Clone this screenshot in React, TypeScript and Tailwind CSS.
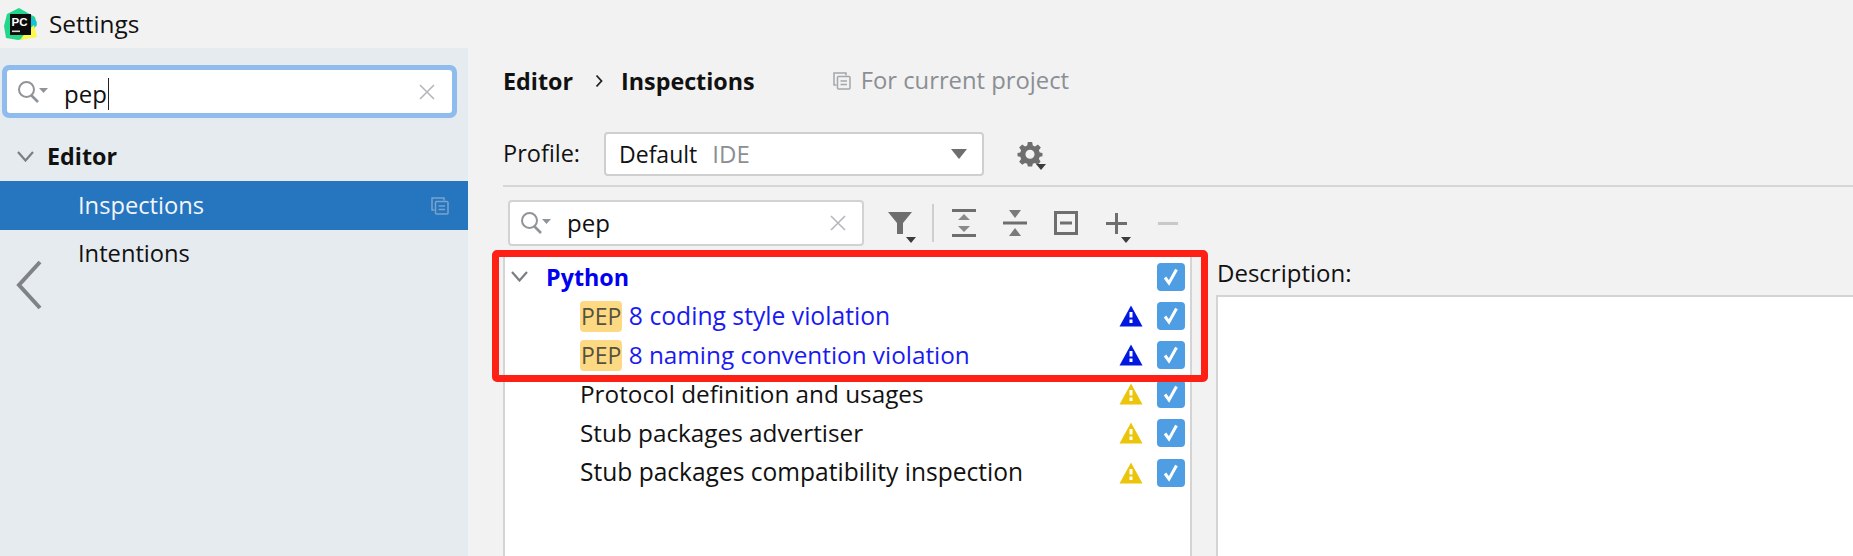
import type { ReactNode } from "react"

const FONT = "[font-family:'Open_Sans','Noto_Sans',sans-serif]"

function SearchIcon() {
    return (
        <svg width="34" height="26" viewBox="0 0 34 26" fill="none">
            <circle cx="10.5" cy="10.5" r="7.5" stroke="#8f9499" strokeWidth="2" />
            <path d="M15.5 16.5 L22 23" stroke="#8f9499" strokeWidth="2.6" />
            <path d="M23 9 H32 L27.5 14 Z" fill="#8f9499" />
        </svg>
    )
}

function ClearIcon({ size = 16 }: { size?: number }) {
    return (
        <svg width={size} height={size} viewBox="0 0 16 16" fill="none">
            <path d="M1 1 L15 15 M15 1 L1 15" stroke="#b4b8bc" strokeWidth="1.6" />
        </svg>
    )
}

function CopyIcon({ color }: { color: string }) {
    return (
        <svg width="18" height="18" viewBox="0 0 18 18" fill="none" stroke={color} strokeWidth="1.5">
            <path d="M3.5 13 H1 V1 H13 V3.5" />
            <rect x="4.5" y="4.5" width="12.5" height="12.5" rx="1" />
            <path d="M7.5 9 H14 M7.5 12.5 H14" />
        </svg>
    )
}

function Chevron() {
    return (
        <svg width="17" height="11" viewBox="0 0 17 11" fill="none">
            <path d="M1 1 L8.5 9.5 L16 1" stroke="#7b7f83" strokeWidth="2.2" />
        </svg>
    )
}

function DropMark() {
    return (
        <svg width="10" height="6" viewBox="0 0 10 6">
            <path d="M0 0 H10 L5 6 Z" fill="#3c3c3c" />
        </svg>
    )
}

function ToolIcon({ width, children, drop }: { width: number; children: ReactNode; drop?: boolean }) {
    return (
        <div className="relative flex h-[30px] items-center justify-center" style={{ width }}>
            {children}
            {drop && (
                <span className="absolute -right-[4px] -bottom-[5px] flex">
                    <DropMark />
                </span>
            )}
        </div>
    )
}

function Severity({ color }: { color: string }) {
    return (
        <svg width="24" height="22" viewBox="0 0 24 22">
            <path d="M12 0.5 L23.5 21.5 H0.5 Z" fill={color} />
            <rect x="10.5" y="7" width="3" height="5.5" fill="#fff" />
            <rect x="10.5" y="14.5" width="3" height="3.5" fill="#fff" />
        </svg>
    )
}

function CheckBox() {
    return (
        <span className="flex h-[28px] w-[28px] flex-none items-center justify-center rounded-[4px] bg-[#4f9ee3]">
            <svg width="20" height="20" viewBox="0 0 20 20" fill="none">
                <path d="M4 10.5 L8 16 L15.5 2.5" stroke="#fff" strokeWidth="3" />
            </svg>
        </span>
    )
}

function Row({ children, severity }: { children: ReactNode; severity?: string }) {
    return (
        <div className="flex h-[39.2px] items-center pr-[5px]">
            <div className="flex-1 whitespace-pre">{children}</div>
            {severity && (
                <span className="mr-[14px] flex">
                    <Severity color={severity} />
                </span>
            )}
            <CheckBox />
        </div>
    )
}

function PepLabel({ text, size }: { text: string; size: string }) {
    return (
        <span className={`ml-[75px] text-[#1a1af0] ${size}`}>
            <span className="inline-block h-[31px] rounded-[4px] bg-[#fed983] px-[1px] text-[23px] leading-[30px] text-[#55523e]">PEP</span>
            {text}
        </span>
    )
}

function PlainLabel({ text, size = "text-[24.3px]" }: { text: string; size?: string }) {
    return <span className={`ml-[75px] text-[#111] ${size}`}>{text}</span>
}

function Sidebar() {
    return (
        <aside className="w-[468px] flex-none bg-[#e6ebf0]">
            <div className="pl-[2px] pt-[17px]">
                <div className="h-[53px] w-[455px] rounded-[7px] bg-[#8fbcec] p-[5px]">
                    <div className="flex h-[43px] items-center rounded-[3px] bg-white pl-[9px] pr-[17px]">
                        <SearchIcon />
                        <span className="ml-[14px] flex-1 text-[24px] text-[#111]">
                            pep<span className="ml-[1px] inline-block h-[32px] w-[1.5px] translate-y-[7px] bg-[#222]" />
                        </span>
                        <ClearIcon />
                    </div>
                </div>
            </div>
            <div className="mt-[14px] flex h-[49px] items-center pl-[17px]">
                <Chevron />
                <span className="ml-[13px] text-[23.3px] font-bold text-[#111]">Editor</span>
            </div>
            <div className="flex h-[49px] items-center justify-between bg-[#2675bf] pl-[78px] pr-[19px] text-[23.7px] text-[#f2f6fa]">
                <span>Inspections</span>
                <CopyIcon color="#7ba3cc" />
            </div>
            <div className="flex h-[47px] items-center pl-[78px] text-[23.7px] text-[#111]">Intentions</div>
        </aside>
    )
}

function Toolbar() {
    return (
        <div className="mt-[13px] flex items-center">
            <div className="ml-[5px] flex h-[46px] w-[356px] items-center rounded-[4px] border-2 border-[#d2d2d2] bg-white pl-[9px] pr-[16px]">
                <SearchIcon />
                <span className="ml-[14px] flex-1 text-[24px] text-[#111]">pep</span>
                <ClearIcon />
            </div>
            <div className="ml-[24px] flex items-center">
                <ToolIcon width={24} drop>
                    <svg width="24" height="22" viewBox="0 0 24 22">
                        <path d="M0 0 H24 L15 11 V22 H9 V11 Z" fill="#6e6e6e" />
                    </svg>
                </ToolIcon>
                <div className="ml-[20px] h-[38px] w-[2px] bg-[#cfcfcf]" />
                <div className="ml-[18px]">
                    <ToolIcon width={24}>
                        <svg width="24" height="28" viewBox="0 0 24 28">
                            <path d="M0 0 H24 V3 H0 Z M0 25 H24 V28 H0 Z" fill="#6e6e6e" />
                            <path d="M12 5 L18 11 H6 Z M12 23 L6 17 H18 Z" fill="#8a8a8a" />
                        </svg>
                    </ToolIcon>
                </div>
                <div className="ml-[27px]">
                    <ToolIcon width={24}>
                        <svg width="24" height="26" viewBox="0 0 24 26">
                            <path d="M0 11.5 H24 V14.5 H0 Z" fill="#6e6e6e" />
                            <path d="M6 0 H18 L12 8 Z M12 18 L18 26 H6 Z" fill="#7a7a7a" />
                        </svg>
                    </ToolIcon>
                </div>
                <div className="ml-[27px]">
                    <ToolIcon width={24}>
                        <svg width="24" height="24" viewBox="0 0 24 24" fill="none">
                            <rect x="1.5" y="1.5" width="21" height="21" stroke="#6e6e6e" strokeWidth="3" />
                            <path d="M6 12 H18" stroke="#6e6e6e" strokeWidth="3" />
                        </svg>
                    </ToolIcon>
                </div>
                <div className="ml-[28px]">
                    <ToolIcon width={21} drop>
                        <svg width="21" height="21" viewBox="0 0 21 21">
                            <path d="M0 9 H21 V12 H0 Z M9 0 H12 V21 H9 Z" fill="#6e6e6e" />
                        </svg>
                    </ToolIcon>
                </div>
                <div className="ml-[31px]">
                    <ToolIcon width={20}>
                        <div className="h-[3px] w-[20px] bg-[#c8c8c8]" />
                    </ToolIcon>
                </div>
            </div>
        </div>
    )
}

function InspectionTree() {
    return (
        <div className="relative h-[299px] w-[689px] flex-none border-x-2 border-[#d4d4d4] bg-white text-[23px]">
            <div className="flex h-[39.2px] items-center pl-[6px] pr-[5px]">
                <Chevron />
                <span className="ml-[18px] flex-1 translate-y-[1px] text-[23.3px] font-bold text-[#0000f0]">Python</span>
                <CheckBox />
            </div>
            <Row severity="#0018e0"><PepLabel size="text-[24.7px]" text=" 8 coding style violation" /></Row>
            <Row severity="#0018e0"><PepLabel size="text-[24.3px]" text=" 8 naming convention violation" /></Row>
            <Row severity="#ecc40a"><PlainLabel text="Protocol definition and usages" /></Row>
            <Row severity="#ecc40a"><PlainLabel text="Stub packages advertiser" /></Row>
            <Row severity="#ecc40a"><PlainLabel size="text-[24.55px]" text="Stub packages compatibility inspection" /></Row>
        </div>
    )
}

export default function App() {
    return (
        <div className={`relative flex h-[556px] w-[1853px] flex-col overflow-hidden bg-[#f2f2f2] ${FONT}`}>

            {/* Title bar */}
            <div className="flex h-[48px] flex-none items-center pl-[4px]">
                <svg width="33" height="32" viewBox="0 0 33 32">
                    <path d="M3 6 L15 0 L22 4 L31 9 L33 17 L28 23 L30 29 L14 32 L2 30 L0 18 Z" fill="#21d789" />
                    <path d="M20 3 L33 14 L29 22 L24 10 Z" fill="#12c2d8" />
                    <path d="M16 32 L33 29 L30 17 L22 24 Z" fill="#fcf84a" />
                    <rect x="6" y="6" width="21" height="21" fill="#0b0b0b" />
                    <text x="7.5" y="18" fill="#fff" fontSize="11.5" fontWeight="700" fontFamily="'Liberation Sans',sans-serif">PC</text>
                    <rect x="8" y="22.5" width="8" height="1.6" fill="#d8d8d8" />
                </svg>
                <span className="ml-[12px] text-[24.4px] text-[#111]">Settings</span>
            </div>

            <div className="flex min-h-0 flex-1">
                <Sidebar />

                <main className="flex-1 pl-[35px]">
                    {/* Breadcrumb */}
                    <div className="flex h-[66px] items-center text-[23.3px]">
                        <span className="font-bold text-[#111]">Editor</span>
                        <svg className="ml-[22px]" width="8" height="14" viewBox="0 0 8 14" fill="none">
                            <path d="M1.5 1.5 L6.5 7 L1.5 12.5" stroke="#222" strokeWidth="1.8" />
                        </svg>
                        <span className="ml-[18px] font-bold text-[#111]">Inspections</span>
                        <span className="ml-[78px] flex"><CopyIcon color="#a4a8ac" /></span>
                        <span className="ml-[10px] text-[23.8px] text-[#8b8f94]">For current project</span>
                    </div>

                    {/* Profile */}
                    <div className="mt-[18px] flex h-[44px] items-center">
                        <span className="text-[23.5px] text-[#111]">Profile:</span>
                        <div className="ml-[24px] flex h-[44px] w-[380px] items-center justify-between rounded-[4px] border-2 border-[#cfcfcf] bg-white pl-[13px] pr-[15px] text-[23px]">
                            <span className="text-[#111]">Default<span className="ml-[15px] text-[24px] text-[#8b8f94]">IDE</span></span>
                            <svg width="16" height="10" viewBox="0 0 16 10"><path d="M0 0 H16 L8 10 Z" fill="#6e6e6e" /></svg>
                        </div>
                        <div className="relative ml-[33px]">
                            <svg className="block" width="26" height="26" viewBox="0 0 24 24">
                                <path fillRule="evenodd" fill="#6e6e6e" d="M10 1 H14 L14.6 4.2 L16.6 5 L19.3 3.2 L22 6 L20.2 8.6 L21 10.6 L23.5 11 V14 L21 14.6 L20.2 16.6 L21.8 19.2 L19 22 L16.5 20.2 L14.6 21 L14 23.5 H10 L9.4 21 L7.4 20.2 L4.8 22 L2 19.2 L3.8 16.6 L3 14.6 L0.5 14 V11 L3 10.6 L3.8 8.6 L2 6 L4.8 3.2 L7.4 5 L9.4 4.2 Z M12 8 A4.2 4.2 0 1 0 12 16.4 A4.2 4.2 0 1 0 12 8 Z" />
                            </svg>
                            <span className="absolute -right-[3px] -bottom-[3px] flex"><DropMark /></span>
                        </div>
                    </div>

                    <div className="mt-[9px] h-[2px] bg-[#d6d6d6]" />

                    <Toolbar />

                    {/* Tree and description */}
                    <div className="mt-[11px] flex">
                        <InspectionTree />
                        <div className="flex h-[299px] flex-1 flex-col pl-[24px]">
                            <div className="h-[38px] pt-[1px] pl-[1px] text-[24px] leading-[30px] text-[#111]">Description:</div>
                            <div className="flex-1 border-l-2 border-t-2 border-[#d4d4d4] bg-white" />
                        </div>
                    </div>
                </main>
            </div>

            {/* Annotation drawn over the screenshot */}
            <div className="absolute left-[492px] top-[250px] h-[132px] w-[716px] rounded-[5px] border-[7px] border-[#fe2015]" />

            {/* Back arrow overlay */}
            <svg className="absolute left-[15px] top-[260px]" width="28" height="50" viewBox="0 0 28 50" fill="none">
                <path d="M25 2 L4 25 L25 48" stroke="#7f8388" strokeWidth="4" />
            </svg>
        </div>
    )
}
